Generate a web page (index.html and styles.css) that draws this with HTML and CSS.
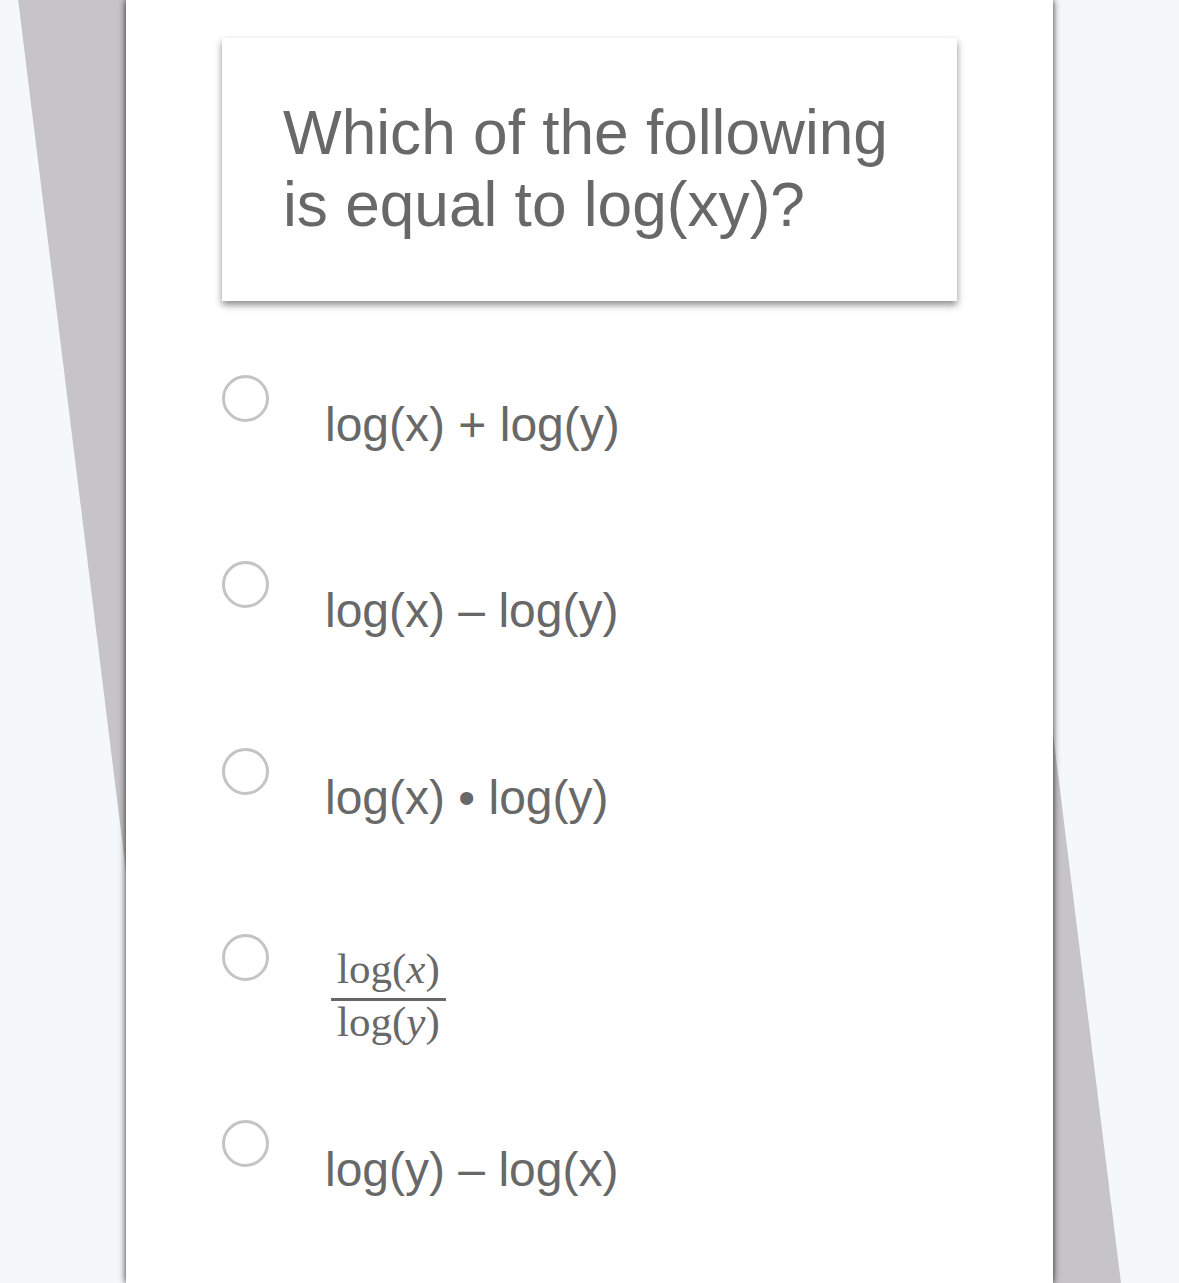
FILE: index.html
```html
<!DOCTYPE html>
<html>
<head>
<meta charset="utf-8">
<link rel="stylesheet" href="styles.css">
</head>
<body>
<div class="backdrop"></div>
<main class="card">
  <section class="question">
    <p class="question-text">Which of the following is equal to log(xy)?</p>
  </section>
  <ul class="options">
    <li class="option"><span class="radio"></span><span class="label">log(x) + log(y)</span></li>
    <li class="option"><span class="radio"></span><span class="label">log(x) – log(y)</span></li>
    <li class="option"><span class="radio"></span><span class="label">log(x) • log(y)</span></li>
    <li class="option"><span class="radio"></span>
      <span class="frac">
        <span class="num">log(<i>x</i>)</span>
        <span class="den">log(<i>y</i>)</span>
      </span>
    </li>
    <li class="option"><span class="radio"></span><span class="label">log(y) – log(x)</span></li>
  </ul>
</main>
</body>
</html>
```

FILE: styles.css
```css
html, body {
  margin: 0;
  padding: 0;
  width: 100%;
  height: 100%;
  overflow: hidden;
}
body {
  background: #f4f8fb;
  position: relative;
  font-family: "Liberation Sans", Arial, sans-serif;
}
.backdrop {
  position: absolute;
  left: 101px;
  top: -359px;
  width: 937px;
  height: 2000px;
  background: #c6c4c6;
  transform: rotate(-7.05deg);
  z-index: 0;
}
.card {
  position: relative;
  z-index: 1;
  margin-left: 126px;
  width: 927px;
  height: 1283px;
  background: #ffffff;
  box-shadow: 0 0 7px rgba(0, 0, 0, 0.85);
  padding: 38px 0 0 96px;
  box-sizing: border-box;
}
.question {
  width: 735px;
  height: 263px;
  box-sizing: border-box;
  background: #fff;
  box-shadow: 0 4px 7px rgba(0, 0, 0, 0.45);
  padding: 59px 40px 0 61px;
}
.question-text {
  margin: 0;
  font-size: 62.2px;
  line-height: 72px;
  color: #686868;
}
.options {
  list-style: none;
  margin: 74px 0 0 0;
  padding: 0;
}
.option {
  display: flex;
  align-items: flex-start;
  height: 186.25px;
}
.radio {
  flex: none;
  width: 47px;
  height: 47px;
  box-sizing: border-box;
  border: 3px solid #c4c4c4;
  border-radius: 50%;
}
.label {
  margin: 23px 0 0 56px;
  font-family: "Liberation Sans", Arial, sans-serif;
  font-size: 48px;
  line-height: 54px;
  color: #686868;
}
.frac {
  margin: 12px 0 0 62px;
  display: inline-flex;
  flex-direction: column;
  align-items: center;
  font-family: "Liberation Serif", "Times New Roman", serif;
  font-size: 43px;
  color: #686868;
}
.frac i {
  font-style: italic;
}
.num {
  line-height: 46px;
  padding: 0 6px 6px;
  border-bottom: 3px solid #686868;
}
.den {
  line-height: 36px;
  margin-top: 3px;
}
```
